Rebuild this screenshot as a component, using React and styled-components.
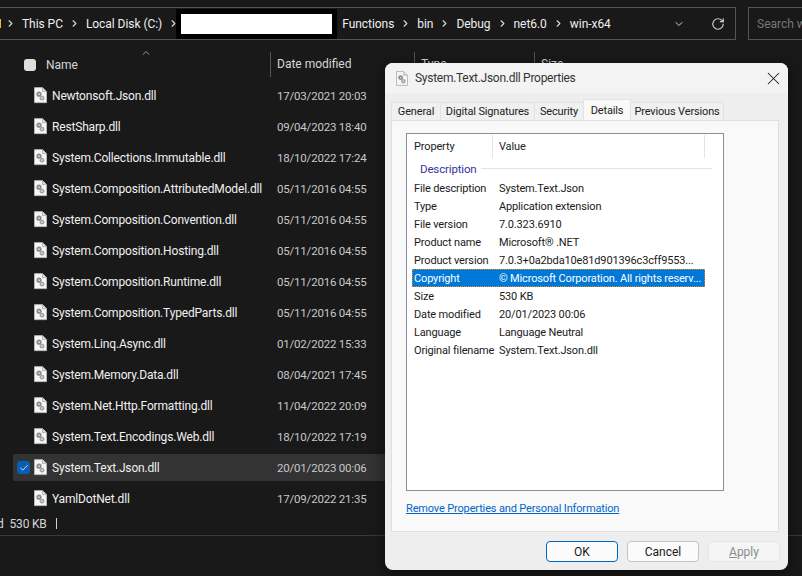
import styled, { createGlobalStyle } from "styled-components";
import { ChevronRight, ChevronDown, ChevronUp, RotateCw, X, Check } from "lucide-react";

const files = [
  { name: "Newtonsoft.Json.dll", date: "17/03/2021 20:03" },
  { name: "RestSharp.dll", date: "09/04/2023 18:40" },
  { name: "System.Collections.Immutable.dll", date: "18/10/2022 17:24" },
  { name: "System.Composition.AttributedModel.dll", date: "05/11/2016 04:55" },
  { name: "System.Composition.Convention.dll", date: "05/11/2016 04:55" },
  { name: "System.Composition.Hosting.dll", date: "05/11/2016 04:55" },
  { name: "System.Composition.Runtime.dll", date: "05/11/2016 04:55" },
  { name: "System.Composition.TypedParts.dll", date: "05/11/2016 04:55" },
  { name: "System.Linq.Async.dll", date: "01/02/2022 15:33" },
  { name: "System.Memory.Data.dll", date: "08/04/2021 17:45" },
  { name: "System.Net.Http.Formatting.dll", date: "11/04/2022 20:09" },
  { name: "System.Text.Encodings.Web.dll", date: "18/10/2022 17:19" },
  { name: "System.Text.Json.dll", date: "20/01/2023 00:06", selected: true },
  { name: "YamlDotNet.dll", date: "17/09/2022 21:35" }
];

const details = [
  ["File description", "System.Text.Json"],
  ["Type", "Application extension"],
  ["File version", "7.0.323.6910"],
  ["Product name", "Microsoft® .NET"],
  ["Product version", "7.0.3+0a2bda10e81d901396c3cff9553..."],
  ["Copyright", "© Microsoft Corporation. All rights reserv...", true],
  ["Size", "530 KB"],
  ["Date modified", "20/01/2023 00:06"],
  ["Language", "Language Neutral"],
  ["Original filename", "System.Text.Json.dll"]
];

const tabs = [
  { label: "General", width: 50 },
  { label: "Digital Signatures", width: 95 },
  { label: "Security", width: 50 },
  { label: "Details", width: 48 },
  { label: "Previous Versions", width: 94 }
];

const DllIcon = ({ size = 13 }) => (
  <svg width={size} height={size * 1.25} viewBox="0 0 13 16">
    <path d="M0.5 0.5H8.5L12.5 4.5V15.5H0.5Z" fill="#f6f6f6" stroke="#b4b4b4" />
    <path d="M8.5 0.5V4.5H12.5" fill="#dedede" stroke="#b4b4b4" />
    <circle cx="5" cy="7" r="2.6" fill="#8a8a8a" />
    <circle cx="5" cy="7" r="0.9" fill="#dcdcdc" />
    <circle cx="8" cy="11" r="2.4" fill="#a2a2a2" />
    <circle cx="8" cy="11" r="0.8" fill="#ececec" />
  </svg>
);

const Chevron = () => (
  <Sep><ChevronRight size={11} strokeWidth={2.5} /></Sep>
);

const App = () => (
  <Window>
    <GlobalStyle />
    <TopBar>
      <AddressBar>
        <FolderEdge />
        <Chevron />
        <Crumb>This PC</Crumb>
        <Chevron />
        <Crumb>Local Disk (C:)</Crumb>
        <Chevron />
        <Redacted><RedactedFill /></Redacted>
        <Crumb>Functions</Crumb>
        <Chevron />
        <Crumb>bin</Crumb>
        <Chevron />
        <Crumb>Debug</Crumb>
        <Chevron />
        <Crumb>net6.0</Crumb>
        <Chevron />
        <Crumb>win-x64</Crumb>
        <BarActions>
          <ChevronDown size={12} />
          <RotateCw size={14} />
        </BarActions>
      </AddressBar>
      <SearchBox>Search w</SearchBox>
    </TopBar>

    <ColumnHeader>
      <HeadCheck />
      <NameHead>
        Name
        <SortCaret><ChevronUp size={12} /></SortCaret>
      </NameHead>
      <HeadCell $width={144}>Date modified</HeadCell>
      <HeadCell $width={120}>Type</HeadCell>
      <HeadCell $width={80}>Size</HeadCell>
    </ColumnHeader>

    <FileList>
      {files.map((file) => (
        <FileRow key={file.name} $selected={file.selected}>
          <RowCheck>
            {file.selected && (
              <CheckBox><Check size={10} strokeWidth={2} color="#fff" /></CheckBox>
            )}
          </RowCheck>
          <DllIcon />
          <FileName>{file.name}</FileName>
          <FileDate>{file.date}</FileDate>
        </FileRow>
      ))}
    </FileList>

    <StatusBar>
      <span>d</span>
      <span>530 KB</span>
      <StatusDivider />
    </StatusBar>

    <Dialog>
      <TitleBar>
        <DllIcon size={12} />
        <DialogTitle>System.Text.Json.dll Properties</DialogTitle>
        <CloseButton><X size={21} strokeWidth={1.2} /></CloseButton>
      </TitleBar>
      <TabStrip>
        {tabs.map((tab) => (
          <Tab key={tab.label} $width={tab.width} $active={tab.label === "Details"}>
            {tab.label}
          </Tab>
        ))}
      </TabStrip>
      <TabPanel>
        <DetailsBox>
          <DetailsHead>
            <PropCol>Property</PropCol>
            <ValueHead>Value</ValueHead>
          </DetailsHead>
          <GroupRow>
            <GroupLabel>Description</GroupLabel>
            <GroupLine />
          </GroupRow>
          {details.map(([label, value, selected]) => (
            <DetailRow key={label} $selected={selected}>
              <PropCol>{label}</PropCol>
              <ValueCol>{value}</ValueCol>
            </DetailRow>
          ))}
        </DetailsBox>
        <RemoveLink>Remove Properties and Personal Information</RemoveLink>
      </TabPanel>
      <Footer>
        <DialogButton $primary>OK</DialogButton>
        <DialogButton>Cancel</DialogButton>
        <DialogButton disabled><u>A</u>pply</DialogButton>
      </Footer>
    </Dialog>
  </Window>
);

const GlobalStyle = createGlobalStyle`
  html, body {
    margin: 0;
    padding: 0;
    background: #191919;
    overflow: hidden;
  }
`;

const Window = styled.div`
  position: relative;
  width: 802px;
  height: 576px;
  overflow: hidden;
  background: #191919;
  color: #f0f0f0;
  font-family: Roboto, "Liberation Sans", sans-serif;
  font-size: 12px;
`;

const TopBar = styled.div`
  display: flex;
  gap: 12px;
  padding-top: 7px;
  height: 34px;
`;

const AddressBar = styled.div`
  display: flex;
  align-items: center;
  width: 735px;
  height: 31px;
  flex-shrink: 0;
  border: 1px solid #555;
  border-left: none;
  font-size: 12px;
  letter-spacing: -0.05px;
`;

const FolderEdge = styled.span`
  width: 1px;
  height: 9px;
  margin-right: -2px;
  background: #e8b73c;
`;

const Sep = styled.span`
  display: flex;
  justify-content: center;
  flex-shrink: 0;
  width: 23px;
  color: #d8d8d8;
`;

const Crumb = styled.span`
  white-space: nowrap;
  color: #efefef;
`;

const Redacted = styled.span`
  display: flex;
  align-items: center;
  justify-content: center;
  align-self: flex-end;
  flex-shrink: 0;
  width: 161px;
  height: 30px;
  margin-left: -9px;
  margin-right: 5px;
  background: #000;
`;

const RedactedFill = styled.span`
  width: 151px;
  height: 20px;
  background: #fff;
`;

const BarActions = styled.span`
  display: flex;
  align-items: center;
  gap: 26px;
  margin-left: auto;
  margin-right: 10px;
  color: #cfcfcf;
`;

const SearchBox = styled.div`
  display: flex;
  align-items: center;
  flex: 1;
  height: 31px;
  padding-left: 8px;
  border: 1px solid #555;
  border-right: none;
  color: #777;
  white-space: nowrap;
  overflow: hidden;
`;

const ColumnHeader = styled.div`
  display: flex;
  align-items: center;
  height: 25px;
  margin-top: 11px;
  padding-left: 24px;
  color: #d6d6d6;
`;

const HeadCheck = styled.span`
  width: 12px;
  height: 12px;
  border-radius: 3px;
  background: #dedede;
`;

const NameHead = styled.div`
  position: relative;
  width: 224px;
  padding-left: 10px;
`;

const SortCaret = styled.span`
  position: absolute;
  top: -11px;
  left: 104px;
  color: #9a9a9a;
`;

const HeadCell = styled.div`
  box-sizing: border-box;
  width: ${(p) => p.$width}px;
  height: 25px;
  line-height: 25px;
  padding-left: 6px;
  border-left: 1px solid #555;
`;

const FileList = styled.div`
  display: flex;
  flex-direction: column;
  gap: 4px;
  margin-top: 5px;
  margin-left: 13px;
  height: 430px;
`;

const FileRow = styled.div`
  display: flex;
  align-items: center;
  box-sizing: border-box;
  width: 400px;
  height: 27px;
  padding-left: 4px;
  background: ${(p) => (p.$selected ? "#333333" : "transparent")};
  border-radius: 2px;
`;

const RowCheck = styled.span`
  width: 13px;
  height: 13px;
  margin-right: 4px;
`;

const CheckBox = styled.span`
  display: flex;
  align-items: center;
  justify-content: center;
  width: 13px;
  height: 13px;
  border-radius: 3px;
  background: #0a5fb4;
`;

const FileName = styled.span`
  width: 212px;
  margin-left: 5px;
  overflow: hidden;
  white-space: nowrap;
  text-overflow: ellipsis;
  letter-spacing: -0.17px;
  color: #f0f0f0;
`;

const FileDate = styled.span`
  margin-left: 13px;
  font-size: 11.5px;
  letter-spacing: -0.2px;
  color: #c8c8c8;
  white-space: nowrap;
`;

const StatusBar = styled.div`
  display: flex;
  align-items: center;
  gap: 6px;
  box-sizing: border-box;
  height: 24px;
  margin-left: -3px;
  border-bottom: 1px solid #3a3a3a;
  letter-spacing: -0.2px;
  color: #d6d6d6;
`;

const StatusDivider = styled.span`
  width: 1px;
  height: 11px;
  margin-left: 3px;
  background: #d0d0d0;
`;

const Dialog = styled.div`
  position: absolute;
  left: 385px;
  top: 63px;
  display: flex;
  flex-direction: column;
  width: 403px;
  height: 507px;
  border-radius: 8px;
  background: #eeeeee;
  color: #1a1a1a;
  font-size: 11px;
  letter-spacing: -0.15px;
  box-shadow: 0 4px 16px rgba(0, 0, 0, 0.5);
`;

const TitleBar = styled.div`
  display: flex;
  align-items: center;
  height: 30px;
  padding: 0 4px 0 11px;
  border-radius: 8px 8px 0 0;
  background: #f3f3f3;
`;

const DialogTitle = styled.span`
  margin-left: 7px;
  font-size: 12px;
  letter-spacing: -0.28px;
  color: #333;
`;

const CloseButton = styled.span`
  display: flex;
  margin-left: auto;
  color: #222;
`;

const TabStrip = styled.div`
  display: flex;
  align-items: flex-end;
  height: 27px;
  padding-left: 7px;
`;

const Tab = styled.div`
  display: flex;
  align-items: center;
  justify-content: center;
  box-sizing: border-box;
  width: ${(p) => p.$width}px;
  height: ${(p) => (p.$active ? 21 : 18)}px;
  border: 1px solid #e2e2e2;
  border-bottom: none;
  margin-left: -1px;
  background: ${(p) => (p.$active ? "#f9f9f9" : "#f0f0f0")};
  color: #222;
  white-space: nowrap;
`;

const TabPanel = styled.div`
  box-sizing: border-box;
  width: 388px;
  height: 412px;
  margin-left: 6px;
  padding: 12px 14px 0;
  border: 1px solid #dfdfdf;
  background: #f9f9f9;
`;

const DetailsBox = styled.div`
  box-sizing: border-box;
  width: 318px;
  height: 358px;
  padding: 1px 5px;
  border: 1px solid #8c8c9c;
  background: #fff;
`;

const DetailsHead = styled.div`
  display: flex;
  align-items: center;
  height: 23px;
  color: #222;
`;

const PropCol = styled.span`
  box-sizing: border-box;
  width: 80px;
  padding-left: 2px;
  flex-shrink: 0;
  white-space: nowrap;
`;

const ValueHead = styled.span`
  box-sizing: border-box;
  width: 213px;
  height: 23px;
  line-height: 23px;
  padding-left: 6px;
  border-left: 1px solid #e5e5e5;
  border-right: 1px solid #e5e5e5;
`;

const ValueCol = styled.span`
  padding-left: 7px;
  white-space: nowrap;
`;

const GroupRow = styled.div`
  display: flex;
  align-items: center;
  height: 21px;
  padding-left: 8px;
`;

const GroupLabel = styled.span`
  color: #33339c;
  font-size: 11.5px;
`;

const GroupLine = styled.span`
  flex: 1;
  height: 1px;
  margin-left: 4px;
  margin-right: 6px;
  background: #dce4ec;
`;

const DetailRow = styled.div`
  display: flex;
  align-items: center;
  box-sizing: border-box;
  width: 293px;
  height: 18px;
  ${(p) => p.$selected && `
    background: #0078d7;
    color: #fff;
    outline: 1px dotted #e8861a;
    outline-offset: -1px;
  `}
`;

const RemoveLink = styled.a`
  display: block;
  margin-top: 11px;
  color: #0066cc;
  text-decoration: underline;
  white-space: nowrap;
`;

const Footer = styled.div`
  display: flex;
  justify-content: flex-end;
  gap: 9px;
  padding: 9px 8px 0 0;
`;

const DialogButton = styled.button`
  box-sizing: border-box;
  width: 72px;
  height: 21px;
  padding: 0;
  border-radius: 4px;
  border: 1px solid ${(p) => (p.$primary ? "#0067c0" : p.disabled ? "#e6e6e6" : "#c4c4c4")};
  background: ${(p) => (p.disabled ? "#f5f5f5" : "#fbfbfb")};
  color: ${(p) => (p.disabled ? "#8c8c8c" : "#1a1a1a")};
  font: inherit;
  font-size: 12px;
`;

export default App;
